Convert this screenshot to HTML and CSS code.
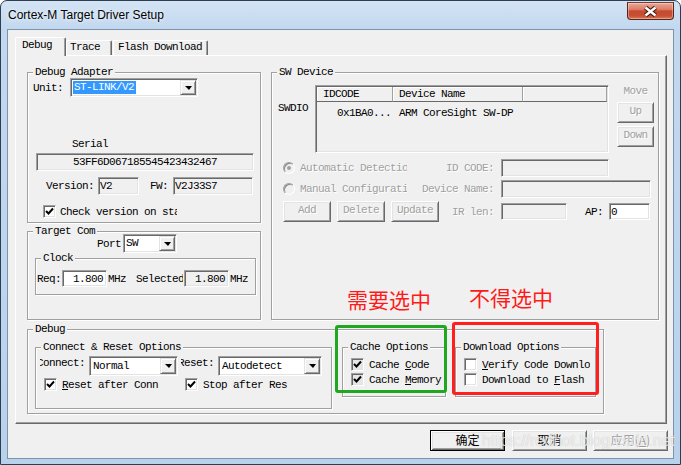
FILE: index.html
```html
<!DOCTYPE html>
<html lang="en">
<head>
    <meta charset="UTF-8">
    <title>Cortex-M Target Driver Setup</title>
    <link rel="stylesheet" href="styles.css">
</head>
<body>
<div class="window">
  <div class="titlebar">
    <span class="title">Cortex-M Target Driver Setup</span>
    <div class="close">
      <svg width="45" height="17" viewBox="0 0 45 17">
        <path d="M17.5 4.5 L27.5 12.5 M27.5 4.5 L17.5 12.5" stroke="#43170f" stroke-width="4.6"/>
        <path d="M17.5 4.5 L27.5 12.5 M27.5 4.5 L17.5 12.5" stroke="#fff" stroke-width="2.4"/>
      </svg>
    </div>
  </div>

  <div class="client">
    <div class="tabs">
      <div class="tab sel">Debug</div>
      <div class="tab trace">Trace</div>
      <div class="tab flash">Flash Download</div>
    </div>

    <div class="panel">
      <div class="top">
        <div class="leftcol">
          <!-- debug adapter -->
          <div class="group g-adapter">
            <div class="cap">Debug Adapter</div>
            <div class="unit-row">
              <span class="unit-lbl">Unit:</span>
              <div class="combo w-unit"><span class="val"><span class="hl">ST-LINK/V2</span></span><span class="dd"></span></div>
            </div>
            <div class="serial-lbl">Serial</div>
            <div class="edit ro serial">53FF6D067185545423432467</div>
            <div class="ver-row">
              <span>Version:</span>
              <div class="edit ro w-ver">V2</div>
              <span class="fw">FW:</span>
              <div class="edit ro w-fw">V2J33S7</div>
            </div>
            <div class="ck check-ver">
              <span class="cb"><svg width="9" height="9" viewBox="0 0 9 9"><path d="M1 4 L3.5 6.5 L8 1.5" fill="none" stroke="#000" stroke-width="2"/></svg></span>
              <span class="t clip w-chk">Check version on startup</span>
            </div>
          </div>

          <!-- target com -->
          <div class="group g-target">
            <div class="cap">Target Com</div>
            <div class="port-row">
              <span>Port</span>
              <div class="combo w-port"><span class="val">SW</span><span class="dd"></span></div>
            </div>
            <div class="group g-clock">
              <div class="cap">Clock</div>
              <div class="req-row">
                <span>Req:</span>
                <div class="edit num w-mhz">1.800</div>
                <span class="mhz">MHz</span>
                <span class="clip w-sel">Selected</span>
                <div class="edit ro num w-mhz sel-f">1.800</div>
                <span class="mhz">MHz</span>
              </div>
            </div>
          </div>
        </div>

        <!-- sw device -->
        <div class="group g-sw">
          <div class="cap">SW Device</div>
          <div class="sw-top">
            <span class="swdio">SWDIO</span>
            <div class="list">
              <div class="lhead">
                <span class="c1">IDCODE</span>
                <span class="c2">Device Name</span>
                <span class="c3"></span>
              </div>
              <div class="lrow">
                <span class="c1">0x1BA0...</span>
                <span class="c2">ARM CoreSight SW-DP</span>
              </div>
            </div>
            <div class="move">
              <div class="move-lbl off">Move</div>
              <div class="pb off up">Up</div>
              <div class="pb off down">Down</div>
            </div>
          </div>

          <div class="swr swr-a">
            <span class="rd rd-on"></span>
            <span class="rtext clip off">Automatic Detection</span>
            <span class="slbl w87 off">ID CODE:</span>
            <div class="edit ro w-id"></div>
          </div>
          <div class="swr swr-b">
            <span class="rd"></span>
            <span class="rtext clip off">Manual Configuration</span>
            <span class="slbl w87 off">Device Name:</span>
            <div class="edit ro w-dn"></div>
          </div>
          <div class="swr swr-c">
            <div class="pb off w-b">Add</div>
            <div class="pb off w-b gap6">Delete</div>
            <div class="pb off w-b gap6">Update</div>
            <span class="slbl w55 off">IR len:</span>
            <div class="edit ro w-ir"></div>
            <span class="slbl w36">AP:</span>
            <div class="edit w-ap">0</div>
          </div>
        </div>
      </div>

      <!-- debug -->
      <div class="group g-debug">
        <div class="cap">Debug</div>
        <div class="dbg-row">
          <div class="group g-conn">
            <div class="cap">Connect &amp; Reset Options</div>
            <div class="cr-row1">
              <span class="cl w45"><span>Connect:</span></span>
              <div class="combo w-conn"><span class="val">Normal</span><span class="dd"></span></div>
              <span class="cl w33"><span>Reset:</span></span>
              <div class="combo w-reset"><span class="val">Autodetect</span><span class="dd"></span></div>
            </div>
            <div class="cr-row2">
              <div class="ck w141">
                <span class="cb"><svg width="9" height="9" viewBox="0 0 9 9"><path d="M1 4 L3.5 6.5 L8 1.5" fill="none" stroke="#000" stroke-width="2"/></svg></span>
                <span class="t"><u>R</u>eset after Conn</span>
              </div>
              <div class="ck">
                <span class="cb"><svg width="9" height="9" viewBox="0 0 9 9"><path d="M1 4 L3.5 6.5 L8 1.5" fill="none" stroke="#000" stroke-width="2"/></svg></span>
                <span class="t">Stop after Res</span>
              </div>
            </div>
          </div>

          <div class="group g-cache">
            <div class="cap">Cache Options</div>
            <div class="ck opt first">
              <span class="cb grey"><svg width="9" height="9" viewBox="0 0 9 9"><path d="M1 4 L3.5 6.5 L8 1.5" fill="none" stroke="#000" stroke-width="2"/></svg></span>
              <span class="t">Cache <u>C</u>ode</span>
            </div>
            <div class="ck opt">
              <span class="cb grey"><svg width="9" height="9" viewBox="0 0 9 9"><path d="M1 4 L3.5 6.5 L8 1.5" fill="none" stroke="#000" stroke-width="2"/></svg></span>
              <span class="t">Cache <u>M</u>emory</span>
            </div>
          </div>

          <div class="group g-dl">
            <div class="cap">Download Options</div>
            <div class="ck opt first">
              <span class="cb"></span>
              <span class="t clip w-ver-dl"><u>V</u>erify Code Download</span>
            </div>
            <div class="ck opt">
              <span class="cb"></span>
              <span class="t">Download to <u>F</u>lash</span>
            </div>
          </div>
        </div>
      </div>
    </div>

    <div class="buttons">
      <div class="pb cn def">确定</div>
      <div class="pb cn g7">取消</div>
      <div class="pb cn g6 off">应用(<u>A</u>)</div>
    </div>
  </div>

  <!-- annotations drawn over the screenshot -->
  <div class="mark green"></div>
  <div class="mark red"></div>
  <div class="note n1">需要选中</div>
  <div class="note n2">不得选中</div>
  <div class="wm">https://redhot.blog.csdn.net</div>
</div>
</body>
</html>
```

FILE: styles.css
```css
*{
    margin: 0;
    padding: 0;
    box-sizing: border-box;
}
body{
    width: 681px;
    height: 465px;
    overflow: hidden;
    background: #fff;
}
.window{
    position: relative;
    width: 681px;
    height: 465px;
    border: 1px solid #2c3e52;
    border-radius: 7px 7px 0 0;
    padding: 0 6px 5px 6px;
    background: linear-gradient(to bottom, #d3e3f4 0, #c2d8ef 28px, #b9d2ec 100%);
    font: 11px/12px "Liberation Mono", monospace;
    letter-spacing: -0.6px;
    color: #000;
}

/* title bar */
.titlebar{
    height: 28px;
    display: flex;
    align-items: flex-start;
}
.title{
    margin: 7px 0 0 1px;
    font: 12px/14px "Liberation Sans", Arial, sans-serif;
    letter-spacing: 0;
    color: #000;
    text-shadow: 0 0 5px #eaf3fc, 0 0 3px #eaf3fc;
}
.close{
    margin: 1px 0 0 auto;
    width: 47px;
    height: 18px;
    border: 1px solid #5a2218;
    border-top-color: #7a3a2e;
    border-radius: 0 0 4px 4px;
    background: linear-gradient(to bottom, #e9a99a 0, #dd7c66 40%, #c44a30 50%, #c84f33 80%, #d97a55 100%);
    box-shadow: inset 0 0 0 1px rgba(255,255,255,0.35);
}
.close svg{
    display: block;
}

/* client */
.client{
    height: 430px;
    border: 1px solid #7d92ab;
    background: #f0f0f0;
}
.tabs{
    display: flex;
    align-items: flex-end;
    height: 25px;
    padding: 7px 0 0 7px;
}
.tab{
    border: 1px solid;
    border-color: #fff #696969 transparent #fff;
    border-bottom: none;
    border-radius: 2px 2px 0 0;
    box-shadow: inset -1px 0 0 #a0a0a0;
    background: #f0f0f0;
    white-space: nowrap;
}
.tab.sel{
    position: relative;
    z-index: 1;
    width: 51px;
    height: 19px;
    margin-bottom: -1px;
    padding: 1px 0 0 6px;
}
.trace{
    width: 46px;
    height: 15px;
    padding-left: 3px;
}
.flash{
    width: 95px;
    height: 15px;
    margin-left: 1px;
    padding-left: 4px;
}
.panel{
    margin-left: 7px;
    width: 652px;
    height: 369px;
    border: 1px solid;
    border-color: #fff #696969 #696969 #fff;
    box-shadow: inset -1px -1px 0 #a0a0a0;
    padding: 16px 0 0 11px;
}
.top{
    display: flex;
    gap: 10px;
    height: 248px;
}
.leftcol{
    width: 234px;
    display: flex;
    flex-direction: column;
}

/* group box */
.group{
    border: 1px solid #a0a0a0;
    box-shadow: inset 1px 1px 0 #fff, 1px 1px 0 #fff;
}
.cap{
    display: table;
    margin: -7px 0 0 5px;
    padding: 0 2px;
    background: #f0f0f0;
    white-space: nowrap;
}
.g-adapter{ height: 151px; }
.g-target{ height: 89px; margin-top: 8px; }
.g-sw{ width: 388px; height: 248px; }
.g-debug{ width: 577px; height: 85px; margin-top: 9px; }

/* controls */
.edit{
    height: 18px;
    border: 1px solid;
    border-color: #a0a0a0 #fff #fff #a0a0a0;
    box-shadow: inset 1px 1px 0 #696969, inset -1px -1px 0 #e3e3e3;
    background: #fff;
    padding: 2px 0 0 2px;
    white-space: nowrap;
    overflow: hidden;
}
.edit.ro{ background: #f0f0f0; }
.combo{
    display: flex;
    height: 19px;
    border: 1px solid;
    border-color: #a0a0a0 #fff #fff #a0a0a0;
    box-shadow: inset 1px 1px 0 #696969, inset -1px -1px 0 #e3e3e3;
    background: #fff;
    padding: 1px;
}
.combo .val{
    flex: 1;
    padding: 1px 0 0 1px;
    white-space: nowrap;
    overflow: hidden;
}
.combo .dd{
    width: 16px;
    border: 1px solid;
    border-color: #e3e3e3 #696969 #696969 #e3e3e3;
    box-shadow: inset 1px 1px 0 #fff, inset -1px -1px 0 #a0a0a0;
    background: #f0f0f0;
    display: flex;
    align-items: center;
    justify-content: center;
}
.combo .dd::after{
    content: "";
    border-top: 4px solid #000;
    border-left: 4px solid transparent;
    border-right: 3px solid transparent;
}
.hl{
    display: inline-block;
    background: #3399ff;
    color: #fff;
    padding: 0 2px 0 1px;
    line-height: 13px;
    margin-top: 0;
}
.pb{
    height: 21px;
    border: 1px solid;
    border-color: #fff #696969 #696969 #fff;
    box-shadow: inset 1px 1px 0 #e3e3e3, inset -1px -1px 0 #a0a0a0;
    background: #f0f0f0;
    text-align: center;
    line-height: 17px;
    white-space: nowrap;
}
.pb.def{
    border-color: #000;
    box-shadow: inset 1px 1px 0 #fff, inset -1px -1px 0 #696969, inset 2px 2px 0 #e3e3e3, inset -2px -2px 0 #a0a0a0;
}
.off{
    color: #a0a0a0;
    text-shadow: 1px 1px 0 #fff;
}
.cb{
    display: flex;
    align-items: center;
    justify-content: center;
    width: 13px;
    height: 13px;
    flex: none;
    border: 1px solid;
    border-color: #a0a0a0 #fff #fff #a0a0a0;
    box-shadow: inset 1px 1px 0 #696969, inset -1px -1px 0 #e3e3e3;
    background: #fff;
}
.cb.grey{ background: #e6e6e6; }
.cb svg{ display: block; }
.ck{
    display: flex;
    align-items: center;
    height: 13px;
}
.ck .t{
    margin-left: 5px;
    white-space: nowrap;
}
.clip{
    overflow: hidden;
    white-space: nowrap;
}
.rd{
    width: 12px;
    height: 12px;
    flex: none;
    border-radius: 50%;
    border: 1px solid;
    border-color: #a0a0a0 #fff #fff #a0a0a0;
    box-shadow: inset 1px 1px 0 #8a8a8a;
    background: #f0f0f0;
    display: flex;
    align-items: center;
    justify-content: center;
}
.rd-on::after{
    content: "";
    width: 4px;
    height: 4px;
    border-radius: 50%;
    background: #a0a0a0;
}

/* debug adapter */
.unit-row{
    display: flex;
    align-items: center;
    height: 19px;
    padding-left: 5px;
}
.unit-lbl{ width: 37px; }
.w-unit{ width: 128px; }
.serial-lbl{
    margin-top: 41px;
    padding-left: 44px;
}
.serial{
    margin: 3px 0 0 8px;
    width: 218px;
    text-align: center;
    padding-left: 0;
}
.ver-row{
    display: flex;
    align-items: center;
    height: 18px;
    margin-top: 6px;
    padding-left: 18px;
}
.w-ver{ width: 41px; margin-left: 4px; padding-left: 1px; }
.fw{ margin-left: 11px; }
.w-fw{ width: 80px; margin-left: 5px; padding-left: 1px; }
.check-ver{
    margin-top: 10px;
    padding-left: 15px;
}
.check-ver .t{ margin-left: 4px; }
.w-chk{ width: 117px; }

/* target com */
.port-row{
    display: flex;
    align-items: center;
    height: 19px;
    margin-top: -3px;
    padding-left: 69px;
}
.w-port{ width: 54px; margin-left: 2px; }
.g-clock{
    margin: 5px 0 0 7px;
    width: 221px;
    height: 37px;
}
.req-row{
    display: flex;
    align-items: center;
    height: 17px;
    margin-top: 6px;
    padding-left: 1px;
}
.num{
    height: 17px;
    text-align: right;
    padding: 2px 3px 0 0;
}
.w-mhz{ width: 45px; margin-left: 1px; }
.mhz{ margin-left: 1px; }
.w-sel{ width: 47px; margin-left: 10px; }
.sel-f{ margin-left: 1px; }

/* sw device */
.sw-top{
    display: flex;
    margin-top: 7px;
    height: 68px;
}
.swdio{
    width: 37px;
    margin-left: 6px;
    padding-top: 17px;
}
.list{
    width: 294px;
    height: 68px;
    border: 1px solid;
    border-color: #a0a0a0 #fff #fff #a0a0a0;
    box-shadow: inset 1px 1px 0 #696969, inset -1px -1px 0 #e3e3e3;
    padding: 1px;
    background: #f0f0f0;
}
.lhead{
    display: flex;
    height: 15px;
}
.lhead span{
    border-right: 1px solid #a0a0a0;
    border-bottom: 1px solid #696969;
    box-shadow: inset 1px 1px 0 #fff;
    padding: 1px 0 0 6px;
    white-space: nowrap;
}
.c1{ width: 76px; }
.c2{ width: 130px; }
.c3{ flex: 1; }
.lrow{
    display: flex;
    padding-top: 5px;
    white-space: nowrap;
}
.lrow .c1{
    text-align: right;
    padding-right: 2px;
}
.lrow .c2{ padding-left: 6px; }
.move{
    width: 37px;
    margin-left: 8px;
}
.move-lbl{ text-align: center; }
.up{ margin-top: 5px; }
.down{ margin-top: 3px; }
.swr{
    display: flex;
    align-items: center;
    padding-left: 11px;
}
.swr-a{ margin-top: 6px; height: 18px; }
.swr-b{ margin-top: 3px; height: 18px; }
.swr-c{ margin-top: 3px; height: 21px; }
.rtext{ width: 107px; margin-left: 5px; }
.slbl{ text-align: right; white-space: nowrap; }
.w87{ width: 87px; }
.w55{ width: 55px; }
.w36{ width: 36px; }
.w-id{ width: 108px; margin-left: 7px; }
.w-dn{ width: 150px; margin-left: 7px; }
.w-b{ width: 48px; }
.gap6{ margin-left: 6px; }
.w-ir{ width: 66px; height: 17px; margin-left: 7px; }
.w-ap{ width: 41px; height: 17px; margin-left: 6px; padding-left: 1px; }

/* debug group */
.dbg-row{
    display: flex;
    align-items: flex-start;
    margin-top: 12px;
    padding-left: 7px;
}
.g-conn{ width: 297px; height: 62px; }
.g-cache{ width: 104px; height: 50px; margin-left: 10px; }
.g-dl{ width: 141px; height: 50px; margin-left: 9px; }
.cr-row1{
    display: flex;
    margin-top: 3px;
    height: 20px;
}
.cl{
    display: flex;
    justify-content: flex-end;
    overflow: hidden;
    white-space: nowrap;
    padding-top: 1px;
}
.w45{ width: 45px; margin-left: 4px; }
.w33{ width: 33px; margin-left: 3px; }
.w-conn{ width: 89px; height: 20px; margin-left: 4px; }
.w-reset{ width: 104px; height: 20px; margin-left: 4px; }
.w-conn .val, .w-reset .val{ padding-top: 2px; padding-left: 2px; }
.cr-row2{
    display: flex;
    margin-top: 2px;
    padding-left: 8px;
}
.w141{ width: 141px; }
.opt{ padding-left: 8px; margin-top: 2px; }
.opt.first{ margin-top: 5px; }
.w-ver-dl{ width: 108px; }

/* bottom buttons */
.buttons{
    display: flex;
    justify-content: flex-end;
    margin-top: 6px;
    padding-right: 5px;
}
.cn{
    width: 75px;
    font: 12px/17px "Noto Sans CJK SC", sans-serif;
    letter-spacing: 0;
}
.g7{ margin-left: 7px; }
.g6{ margin-left: 6px; }

/* annotations */
.mark{
    position: absolute;
    border: 3px solid;
    border-radius: 3px;
}
.green{
    left: 334px;
    top: 324px;
    width: 112px;
    height: 68px;
    border-color: #1fa81f;
}
.red{
    left: 451px;
    top: 321px;
    width: 147px;
    height: 73px;
    border-color: #ff1f1f;
}
.note{
    position: absolute;
    font: 21px/21px "Noto Sans CJK SC", sans-serif;
    letter-spacing: 0;
    color: #ff1a1a;
}
.n1{ left: 346px; top: 288px; }
.n2{ left: 468px; top: 286px; }
.wm{
    position: absolute;
    left: 481px;
    top: 431px;
    font: 16px/18px "Liberation Sans", sans-serif;
    letter-spacing: 0;
    color: rgba(255,255,255,0.75);
    text-shadow: 0 0 1px rgba(0,0,0,0.25);
}
```
